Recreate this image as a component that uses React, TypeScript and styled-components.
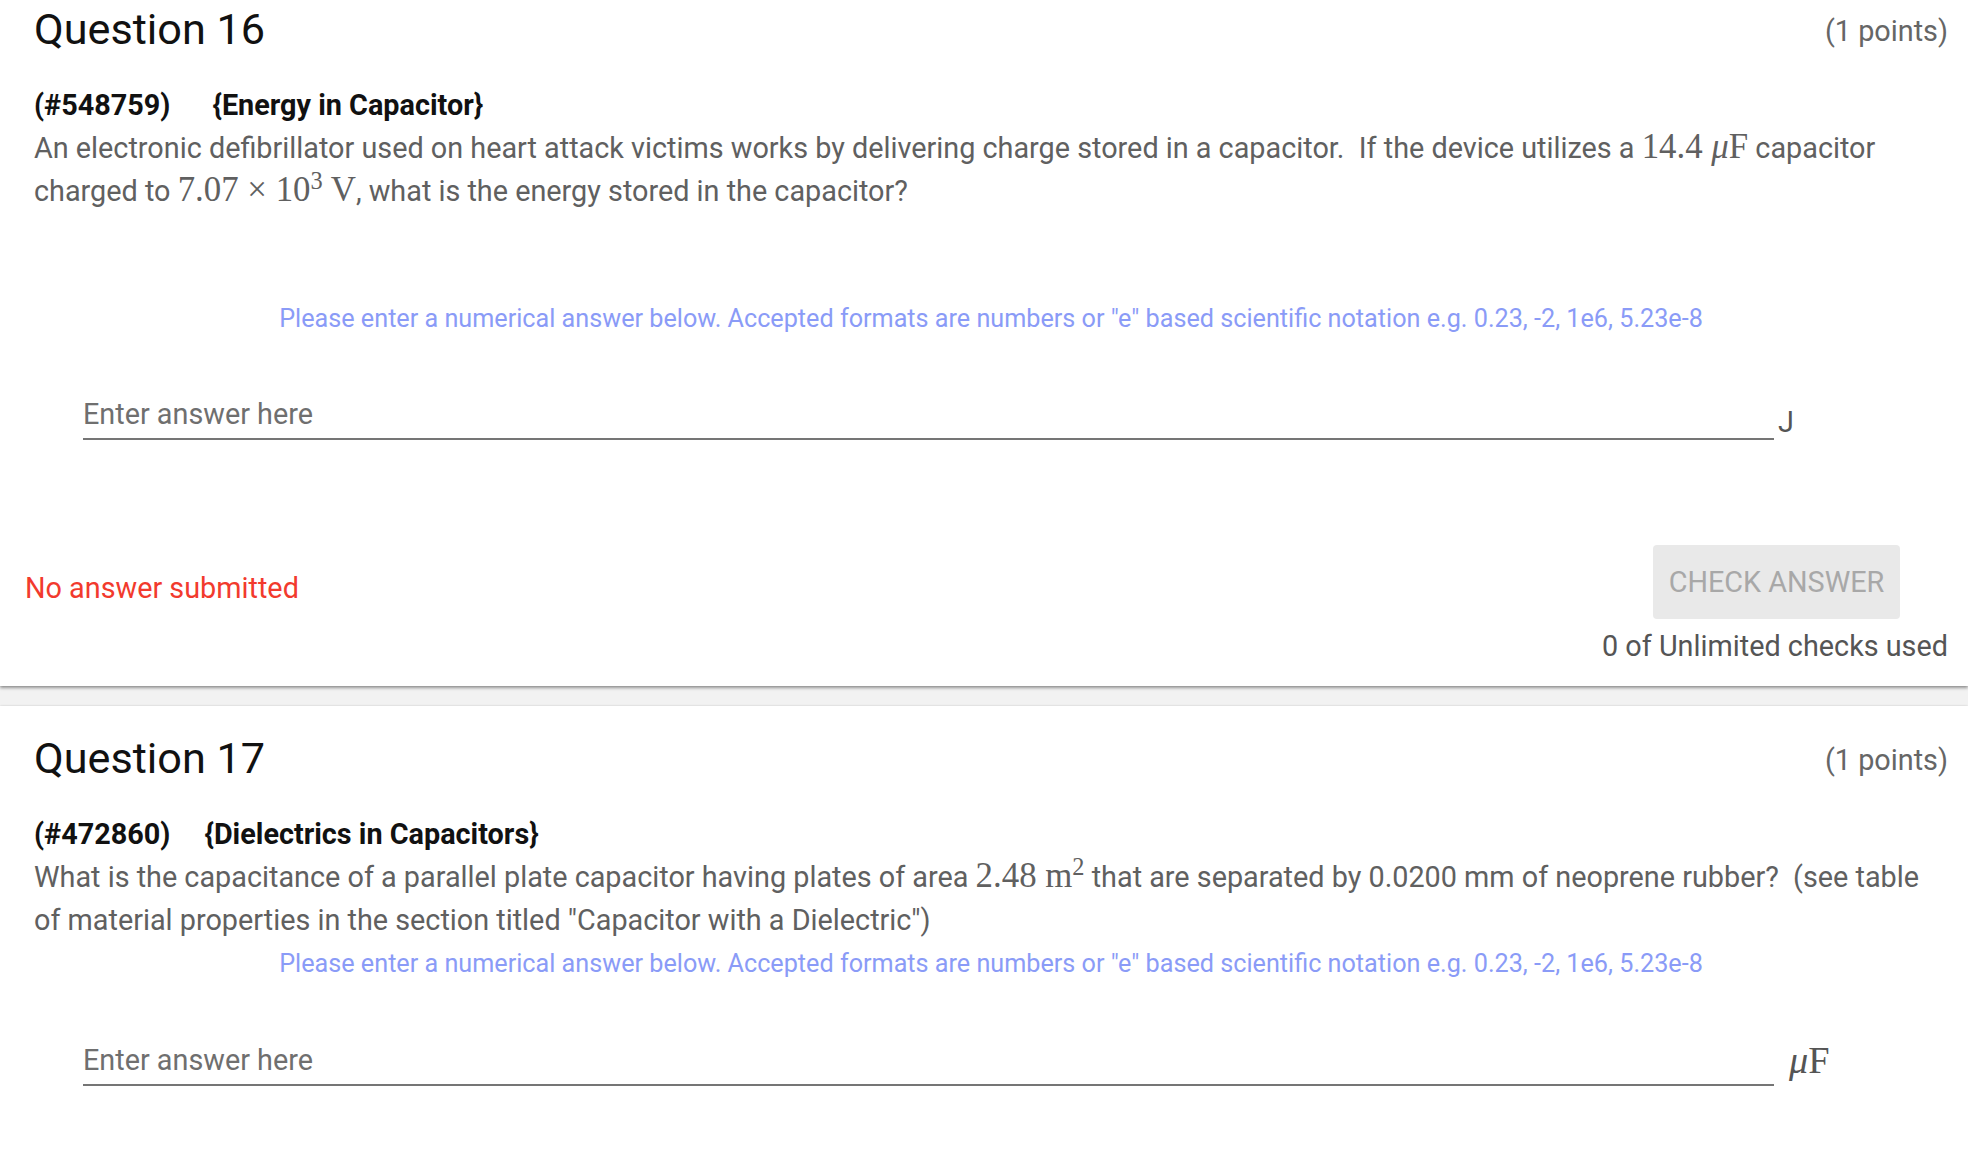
import React from 'react';
import styled, { createGlobalStyle } from 'styled-components';

const GlobalStyle = createGlobalStyle`
  body {
    margin: 0;
    background: #f2f2f2;
    font-family: Roboto, "Liberation Sans", Arial, sans-serif;
  }
`;

// the page is scrolled a little, so the first card starts above the window
const Page = styled.div`
  display: flex;
  flex-direction: column;
  gap: 20px;
  margin-top: -23px;
`;

const Card = styled.section`
  background: #fff;
  padding: 27px 20px 17px 34px;
  box-shadow: 0 2px 3px rgba(0, 0, 0, 0.38), 0 0 2px rgba(0, 0, 0, 0.12);
`;

const Header = styled.div`
  display: flex;
  justify-content: space-between;
  align-items: flex-start;
`;

const Title = styled.h2`
  margin: 0;
  font-size: 43.2px;
  line-height: 52px;
  font-weight: 400;
  color: #111;
`;

const Points = styled.span`
  margin-top: 10px;
  font-size: 28.8px;
  color: #666;
`;

const Meta = styled.div`
  margin-top: 28px;
  font-size: 28.8px;
  line-height: 43.2px;
  font-weight: 700;
  color: #111;
`;

const Topic = styled.span<{ $gap: number }>`
  margin-left: ${(p) => p.$gap}px;
`;

const Body = styled.p<{ $after: number }>`
  margin: 0;
  padding-bottom: ${(p) => p.$after}px;
  font-size: 28.8px;
  line-height: 43.2px;
  color: #606060;
`;

const Math = styled.span`
  font-family: "Liberation Serif", "DejaVu Serif", serif;
  font-size: 1.21em;
  line-height: 0;
  white-space: nowrap;

  i {
    font-style: italic;
  }

  sup {
    font-size: 0.7em;
    line-height: 0;
    vertical-align: 0.5em;
  }
`;

const UnitMath = styled(Math)`
  margin-left: 11px;
  font-size: 1.33em;
  vertical-align: 4px;
`;

const Hint = styled.div`
  margin-top: 3px;
  text-align: center;
  font-size: 25.2px;
  line-height: 37.8px;
  color: #8a9bf7;
`;

const InputRow = styled.div`
  display: flex;
  align-items: flex-end;
  margin-top: 53px;
  margin-left: 49px;
`;

const AnswerInput = styled.input`
  flex: 1;
  min-width: 0;
  height: 48px;
  padding: 0;
  border: none;
  border-bottom: 2px solid #757575;
  outline: none;
  background: transparent;
  font-family: Roboto, "Liberation Sans", Arial, sans-serif;
  font-size: 28.8px;
  color: #333;

  &::placeholder {
    color: #6f6f6f;
  }
`;

const Unit = styled.span`
  flex: 0 0 170px;
  margin-left: 4px;
  padding-bottom: 4px;
  font-size: 28.8px;
  line-height: 28.8px;
  color: #555;
`;

const Footer = styled.div`
  display: flex;
  justify-content: space-between;
  align-items: flex-start;
  margin-top: 105px;
  margin-left: -9px;
`;

const Status = styled.div`
  margin-top: 22px;
  font-size: 28.8px;
  line-height: 43.2px;
  color: #f23a2d;
`;

const Actions = styled.div`
  display: flex;
  flex-direction: column;
  align-items: flex-end;
`;

const CheckButton = styled.button`
  width: 247px;
  height: 74px;
  margin-right: 48px;
  border: none;
  border-radius: 4px;
  background: #e9e9e9;
  color: #a8a8a8;
  font-family: Roboto, "Liberation Sans", Arial, sans-serif;
  font-size: 28.8px;
  text-transform: uppercase;
  cursor: default;
`;

const CheckCount = styled.div`
  margin-top: 6px;
  font-size: 28.8px;
  line-height: 43.2px;
  color: #555;
`;

const HINT =
  'Please enter a numerical answer below. Accepted formats are numbers or "e" based scientific notation e.g. 0.23, -2, 1e6, 5.23e-8';

type QuestionProps = {
  number: number;
  id: string;
  topic: string;
  topicGap: number;
  bodyAfter: number;
  unit: React.ReactNode;
  children: React.ReactNode;
};

const Question: React.FC<QuestionProps> = ({ number, id, topic, topicGap, bodyAfter, unit, children }) => (
  <Card>
    <Header>
      <Title>Question {number}</Title>
      <Points>(1 points)</Points>
    </Header>
    <Meta>
      ({id})<Topic $gap={topicGap}>{`{${topic}}`}</Topic>
    </Meta>
    <Body $after={bodyAfter}>{children}</Body>
    <Hint>{HINT}</Hint>
    <InputRow>
      <AnswerInput type="text" placeholder="Enter answer here" />
      <Unit>{unit}</Unit>
    </InputRow>
    <Footer>
      <Status>No answer submitted</Status>
      <Actions>
        <CheckButton disabled>Check Answer</CheckButton>
        <CheckCount>0 of Unlimited checks used</CheckCount>
      </Actions>
    </Footer>
  </Card>
);

const App: React.FC = () => (
  <>
    <GlobalStyle />
    <Page>
      <Question number={16} id="#548759" topic="Energy in Capacitor" topicGap={42} bodyAfter={83} unit="J">
        An electronic defibrillator used on heart attack victims works by delivering charge stored in a
        capacitor.&nbsp; If the device utilizes a{' '}
        <Math>
          14.4 <i>μ</i>F
        </Math>{' '}
        capacitor charged to{' '}
        <Math>
          7.07 × 10<sup>3</sup> V
        </Math>
        , what is the energy stored in the capacitor?
      </Question>
      <Question
        number={17}
        id="#472860"
        topic="Dielectrics in Capacitors"
        topicGap={34}
        bodyAfter={0}
        unit={
          <UnitMath>
            <i>μ</i>F
          </UnitMath>
        }
      >
        What is the capacitance of a parallel plate capacitor having plates of area{' '}
        <Math>
          2.48 m<sup>2</sup>
        </Math>{' '}
        that are separated by 0.0200 mm of neoprene rubber?&nbsp; (see table of material properties in the
        section titled "Capacitor with a Dielectric")
      </Question>
    </Page>
  </>
);

export default App;
